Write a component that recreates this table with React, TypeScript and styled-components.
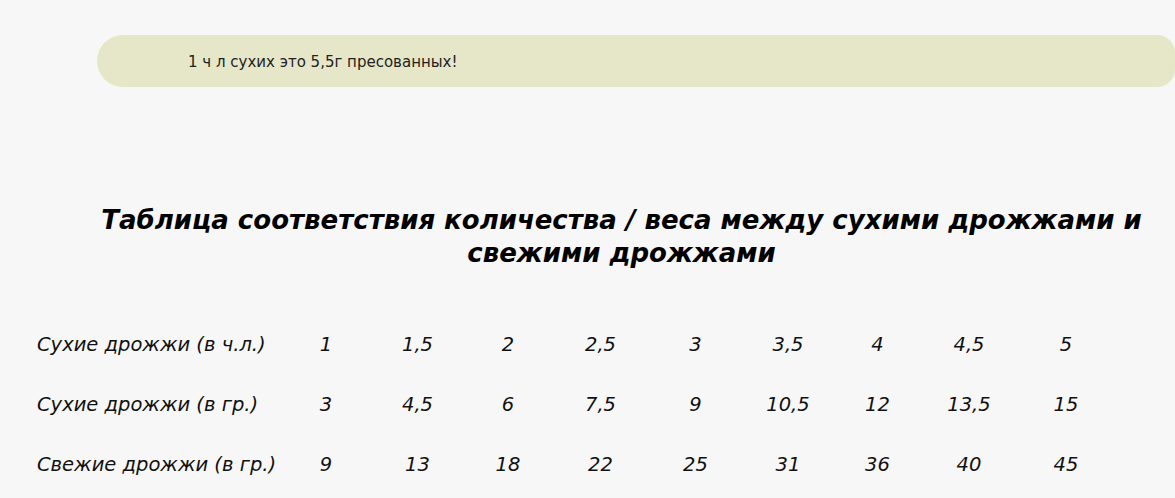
import styled, { createGlobalStyle } from 'styled-components';

const GlobalStyle = createGlobalStyle`
    body {
        margin: 0;
        background-color: #f7f7f7;
        font-family: "DejaVu Sans", Verdana, sans-serif;
        color: #111;
    }
`;

const Page = styled.div`
    display: flex;
    flex-direction: column;
    padding-top: 35px;
`;

const Banner = styled.div`
    margin-left: 97px;
    height: 52px;
    display: flex;
    align-items: center;
    padding: 2px 0 0 91px;
    box-sizing: border-box;
    background-color: #e6e7c8;
    border-radius: 26px 18px 18px 26px;
    font-size: 15px;
    color: #222;
`;

const Title = styled.h2`
    margin: 117px 0 0 68px;
    text-align: center;
    font-size: 26px;
    line-height: 33px;
    font-weight: bold;
    font-style: italic;
    color: #000;
`;

const Grid = styled.div`
    margin: 44px 0 0 37px;
    display: grid;
    grid-template-columns: 243px 92px 91px 90px 95px 95px 90px 89px 94px 100px;
    grid-auto-rows: 60px;
    font-style: italic;
    font-size: 19.5px;
`;

const Cell = styled.div<{label?: boolean}>`
    display: flex;
    align-items: center;
    justify-content: ${props => props.label ? "flex-start" : "center"};
    white-space: nowrap;
`;

const rows: {label: string, values: string[]}[] = [
    {label: "Сухие дрожжи (в ч.л.)", values: ["1", "1,5", "2", "2,5", "3", "3,5", "4", "4,5", "5"]},
    {label: "Сухие дрожжи (в гр.)", values: ["3", "4,5", "6", "7,5", "9", "10,5", "12", "13,5", "15"]},
    {label: "Свежие дрожжи (в гр.)", values: ["9", "13", "18", "22", "25", "31", "36", "40", "45"]},
];

const App = () => {
    return(
        <Page>
            <GlobalStyle/>
            <Banner>1 ч л сухих это 5,5г пресованных!</Banner>
            <Title>Таблица соответствия количества / веса между сухими дрожжами и свежими дрожжами</Title>
            <Grid>
                {rows.map(row => [
                    <Cell label key={row.label}>{row.label}</Cell>,
                    ...row.values.map((v, i) => <Cell key={row.label + i}>{v}</Cell>)
                ])}
            </Grid>
        </Page>
    );
}

export default App;
